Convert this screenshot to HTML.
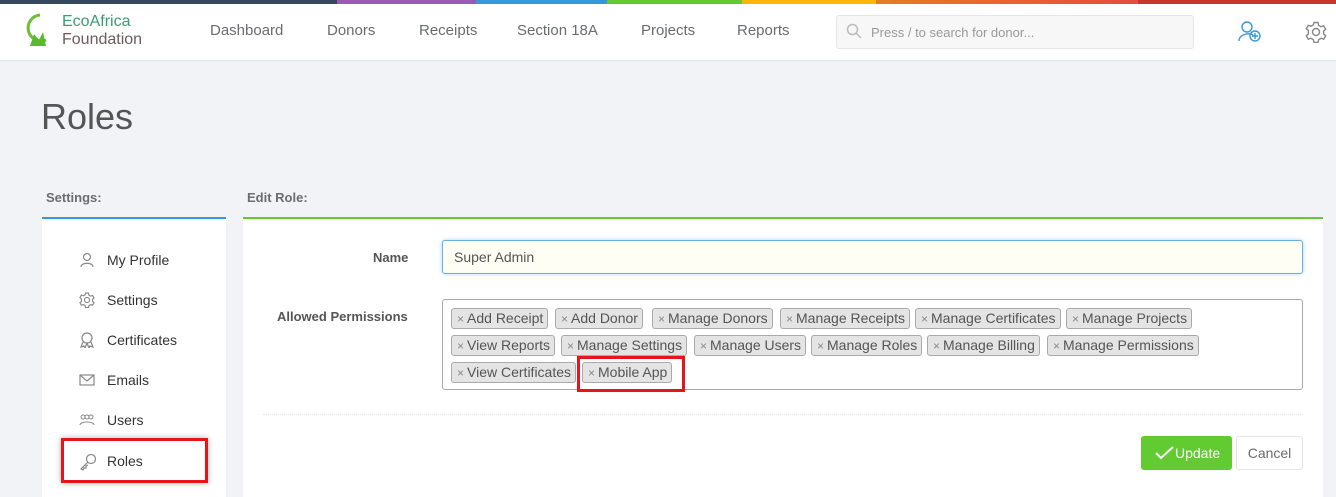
<!DOCTYPE html>
<html><head><style>
*{box-sizing:border-box;margin:0;padding:0}
body{width:1336px;height:489px;overflow:hidden;background:#f1f3f6;font-family:"Liberation Sans",sans-serif;position:relative;color:#6a6c6f}
.a{position:absolute}
.stripe{top:0;height:4px}
.nav{font-size:15px;color:#6a6c6f;top:22px}
.tag{position:absolute;height:21px;border:1px solid #aaa;border-radius:3px;background:#e4e4e4;font-size:14px;color:#555;line-height:19px;padding:0 4px 0 5px;white-space:nowrap}
.tag b{font-weight:normal;color:#888;font-size:12px;margin-right:3px}
.mi{position:absolute;left:79px;font-size:14px;color:#333;white-space:nowrap;width:140px;height:18px}
.mi span{position:absolute;left:28px;top:0}
</style></head><body>
<div class="a stripe" style="left:0;width:337px;background:#34495e"></div>
<div class="a stripe" style="left:337px;width:139px;background:#9b59b6"></div>
<div class="a stripe" style="left:476px;width:131px;background:#3498db"></div>
<div class="a stripe" style="left:607px;width:135px;background:#62cb31"></div>
<div class="a stripe" style="left:742px;width:134px;background:#ffb606"></div>
<div class="a stripe" style="left:876px;width:262px;background:linear-gradient(90deg,#e67e22,#e74c3c)"></div>
<div class="a stripe" style="left:1138px;width:198px;background:#c0392b"></div>
<div class="a" style="top:4px;left:0;width:1336px;height:57px;background:#fff;border-bottom:1px solid #e4e5e7"></div>
<svg class="a" style="left:24px;top:12px" width="30" height="36" viewBox="0 0 30 36"><path d="M16 3 A13 13 0 1 0 22 28" fill="none" stroke="#6bbf3a" stroke-width="3"/><path d="M6 34 L10 22 L15 28 L19 20 L22 34 Z" fill="#5cb82e"/></svg>
<div class="a" style="left:62px;top:13px;font-size:16px;line-height:18px;color:#3f9c72">EcoAfrica</div>
<div class="a" style="left:62px;top:31px;font-size:16px;line-height:18px;color:#6d5b5e">Foundation</div>
<div class="a nav" style="left:210px">Dashboard</div>
<div class="a nav" style="left:327px">Donors</div>
<div class="a nav" style="left:419px">Receipts</div>
<div class="a nav" style="left:517px">Section 18A</div>
<div class="a nav" style="left:641px">Projects</div>
<div class="a nav" style="left:737px">Reports</div>
<div class="a" style="left:836px;top:15px;width:358px;height:34px;background:#f7f7f7;border:1px solid #e4e5e7;border-radius:3px"></div>
<svg class="a" style="left:846px;top:23px" width="16" height="16"><circle cx="6.5" cy="6.5" r="5" fill="none" stroke="#bbb" stroke-width="1.5"/><path d="M10 10 L15 15" stroke="#bbb" stroke-width="1.5"/></svg>
<div class="a" style="left:871px;top:25px;font-size:13px;color:#999">Press / to search for donor...</div>
<svg class="a" style="left:1238px;top:20px" width="26" height="24" fill="none" stroke="#3498db" stroke-width="1.4"><circle cx="9" cy="7" r="5"/><path d="M1 21 C1 13 15 12 15 16"/><circle cx="17" cy="16" r="5"/><path d="M17 13v6M14 16h6"/></svg>
<svg class="a" style="left:1305px;top:21px" width="22" height="22" viewBox="0 0 22 22" fill="none" stroke="#888" stroke-width="1.4"><circle cx="11" cy="11" r="3.5"/><path d="M9 1.5h4l.6 2.8 2.4 1.4 2.7-.9 2 3.4-2.1 1.9v2.8l2.1 1.9-2 3.4-2.7-.9-2.4 1.4-.6 2.8H9l-.6-2.8-2.4-1.4-2.7.9-2-3.4 2.1-1.9V9.6L1.3 7.7l2-3.4 2.7.9 2.4-1.4z"/></svg>
<div class="a" style="left:41px;top:96px;font-size:36px;color:#555">Roles</div>
<div class="a" style="left:46px;top:190px;font-size:13px;font-weight:bold;color:#6a6c6f">Settings:</div>
<div class="a" style="left:247px;top:190px;font-size:13px;font-weight:bold;color:#6a6c6f">Edit Role:</div>
<div class="a" style="left:42px;top:217px;width:184px;height:280px;background:#fff;border-top:2px solid #3498db"></div>
<div class="a" style="left:243px;top:217px;width:1080px;height:280px;background:#fff;border-top:2px solid #62cb31"></div>
<div class="mi" style="top:252px"><svg width="16" height="16" fill="none" stroke="#888" stroke-width="1.2"><circle cx="8" cy="5" r="3.5"/><path d="M2 15c0-5 12-5 12 0"/></svg><span>My Profile</span></div>
<div class="mi" style="top:292px"><svg width="16" height="16" viewBox="0 0 22 22" fill="none" stroke="#888" stroke-width="1.6"><circle cx="11" cy="11" r="3.5"/><path d="M9 1.5h4l.6 2.8 2.4 1.4 2.7-.9 2 3.4-2.1 1.9v2.8l2.1 1.9-2 3.4-2.7-.9-2.4 1.4-.6 2.8H9l-.6-2.8-2.4-1.4-2.7.9-2-3.4 2.1-1.9V9.6L1.3 7.7l2-3.4 2.7.9 2.4-1.4z"/></svg><span>Settings</span></div>
<div class="mi" style="top:332px"><svg width="16" height="16" fill="none" stroke="#888" stroke-width="1.2"><circle cx="8" cy="6" r="5"/><path d="M4 10l-2 5 3-1 1 2 2-5M12 10l2 5-3-1-1 2-2-5"/></svg><span>Certificates</span></div>
<div class="mi" style="top:372px"><svg width="16" height="16" fill="none" stroke="#888" stroke-width="1.2"><rect x="1" y="3" width="14" height="10"/><path d="M1 3l7 6 7-6"/></svg><span>Emails</span></div>
<div class="mi" style="top:412px"><svg width="16" height="16" fill="none" stroke="#888" stroke-width="1"><circle cx="4" cy="5" r="2"/><circle cx="8" cy="5" r="2"/><circle cx="12" cy="5" r="2"/><path d="M1 13c0-4 14-4 14 0"/></svg><span>Users</span></div>
<div class="a" style="left:61px;top:438px;width:147px;height:45px;border:3px solid #e8141c;box-shadow:0 0 6px rgba(0,0,0,.3)"></div>
<div class="mi" style="top:453px"><svg width="18" height="18" fill="none" stroke="#888" stroke-width="1.2"><circle cx="12" cy="6" r="4.5"/><path d="M9 9L2 16l2 1 1-2 2 0 0-2 2-1"/></svg><span>Roles</span></div>
<div class="a" style="left:373px;top:250px;font-size:13px;font-weight:bold;color:#555">Name</div>
<div class="a" style="left:277px;top:309px;font-size:13px;font-weight:bold;color:#555">Allowed Permissions</div>
<div class="a" style="left:442px;top:240px;width:861px;height:34px;background:#fffef5;border:1px solid #66afe9;border-radius:3px;box-shadow:0 0 4px rgba(102,175,233,.5)"></div>
<div class="a" style="left:454px;top:249px;font-size:14px;color:#555">Super Admin</div>
<div class="a" style="left:442px;top:299px;width:861px;height:91px;border:1px solid #aaa;border-radius:3px"></div>
<div class="tag" style="left:451px;top:308px"><b>×</b>Add Receipt</div>
<div class="tag" style="left:555px;top:308px"><b>×</b>Add Donor</div>
<div class="tag" style="left:652px;top:308px"><b>×</b>Manage Donors</div>
<div class="tag" style="left:780px;top:308px"><b>×</b>Manage Receipts</div>
<div class="tag" style="left:915px;top:308px"><b>×</b>Manage Certificates</div>
<div class="tag" style="left:1066px;top:308px"><b>×</b>Manage Projects</div>
<div class="tag" style="left:451px;top:335px"><b>×</b>View Reports</div>
<div class="tag" style="left:561px;top:335px"><b>×</b>Manage Settings</div>
<div class="tag" style="left:694px;top:335px"><b>×</b>Manage Users</div>
<div class="tag" style="left:811px;top:335px"><b>×</b>Manage Roles</div>
<div class="tag" style="left:927px;top:335px"><b>×</b>Manage Billing</div>
<div class="tag" style="left:1047px;top:335px"><b>×</b>Manage Permissions</div>
<div class="tag" style="left:451px;top:362px"><b>×</b>View Certificates</div>
<div class="tag" style="left:582px;top:362px"><b>×</b>Mobile App</div>
<div class="a" style="left:577px;top:356px;width:108px;height:36px;border:3px solid #e8141c"></div>
<div class="a" style="left:263px;top:414px;width:1040px;border-top:1px dotted #e4e5e7"></div>
<div class="a" style="left:1141px;top:436px;width:91px;height:34px;background:#62cb31;border-radius:3px;color:#fff;font-size:14px;line-height:34px;padding-left:14px"><svg width="20" height="14" style="position:absolute;left:14px;top:10px" fill="none" stroke="#fff" stroke-width="2"><path d="M1 7l5 5L18 1"/></svg><span style="margin-left:20px">Update</span></div>
<div class="a" style="left:1236px;top:436px;width:67px;height:34px;background:#fff;border:1px solid #e4e5e7;border-radius:3px;color:#6a6c6f;font-size:14px;line-height:32px;text-align:center">Cancel</div>
</body></html>
